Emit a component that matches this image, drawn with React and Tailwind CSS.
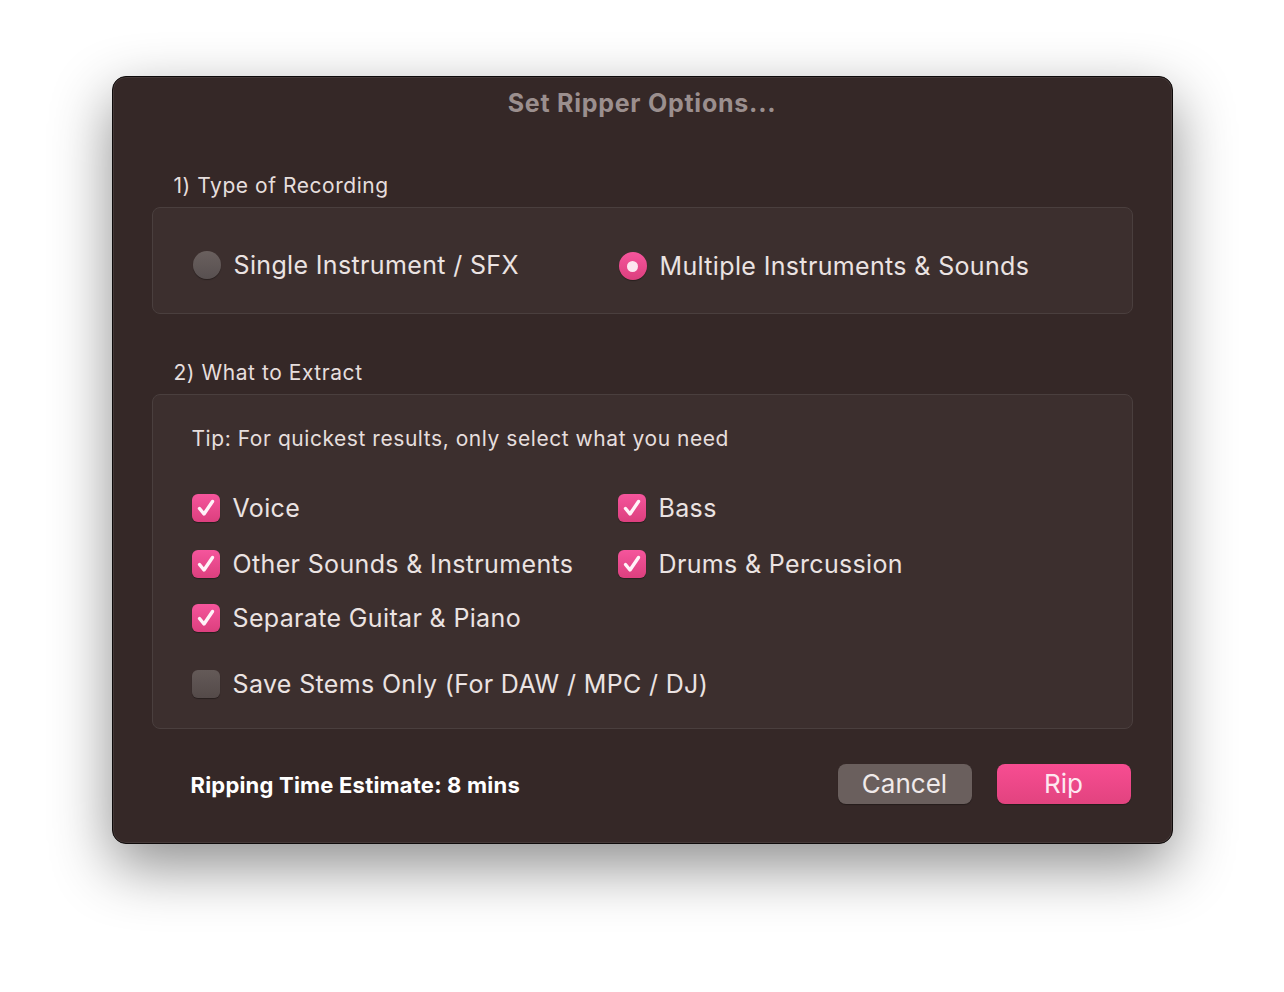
import React, { useState } from 'react';

const font = { fontFamily: 'Inter, "Noto Sans", "Liberation Sans", sans-serif' };

function Radio({ checked, label, onClick }) {
  return (
    <button onClick={onClick} className="flex items-center gap-[13px] text-left">
      {checked ? (
        <span className="flex h-[28px] w-[28px] items-center justify-center rounded-full bg-gradient-to-b from-[#f5559c] to-[#dc3f7e] shadow-[0_1px_1px_rgba(0,0,0,0.35)]">
          <span className="h-[11px] w-[11px] rounded-full bg-[#fde6f0]" />
        </span>
      ) : (
        <span className="h-[28px] w-[28px] rounded-full bg-gradient-to-b from-[#6a605e] to-[#585050] shadow-[0_1px_1px_rgba(0,0,0,0.35)]" />
      )}
      <span className="text-[25px] leading-[28px] tracking-[0.35px] text-[#ebe3e2]">{label}</span>
    </button>
  );
}

function Check({ checked, label, onClick }) {
  return (
    <button onClick={onClick} className="flex h-[28px] items-center gap-[13px] text-left">
      {checked ? (
        <span className="flex h-[28px] w-[28px] items-center justify-center rounded-[6px] bg-gradient-to-b from-[#f5559c] to-[#dc3f7e] shadow-[0_1px_1px_rgba(0,0,0,0.35)]">
          <svg width="24" height="24" viewBox="0 0 24 24" fill="none">
            <path d="M5.5 12.5 L10 18 L18.5 5.5" stroke="#fff3f8" strokeWidth="3.4" strokeLinecap="round" strokeLinejoin="round" />
          </svg>
        </span>
      ) : (
        <span className="h-[28px] w-[28px] rounded-[6px] bg-gradient-to-b from-[#645a58] to-[#544a49] shadow-[0_1px_1px_rgba(0,0,0,0.35)]" />
      )}
      <span className="text-[25px] leading-[28px] tracking-[0.35px] text-[#ebe3e2]">{label}</span>
    </button>
  );
}

export default function App() {
  const [type, setType] = useState('multi');
  const [opts, setOpts] = useState({
    voice: true,
    bass: true,
    other: true,
    drums: true,
    separate: true,
    stems: false,
  });

  const toggle = (k) => setOpts({ ...opts, [k]: !opts[k] });

  return (
    <div className="min-h-[992px] w-full bg-white pt-[76px]" style={font}>
      <div className="mx-auto h-[768px] w-[1061px] rounded-[14px] border border-[#0e0a0a] bg-[#352827] px-[39px] shadow-[0_22px_60px_rgba(0,0,0,0.45),inset_0_0_0_1px_rgba(255,255,255,0.08)]">
        <div className="pt-[12px] text-center text-[25px] font-bold leading-[28px] tracking-[0.75px] text-[#9b8f8e]">
          Set Ripper Options...
        </div>

        <div className="mt-[57px] pl-[22px] text-[21px] leading-[24px] tracking-[0.55px] text-[#e6dedd]">1) Type of Recording</div>
        <div className="mt-[9px] grid h-[107px] grid-cols-[426px_1fr] items-center rounded-[8px] border border-[#4a3f3e] bg-[#3c2f2e] pl-[40px] pt-[8px]">
          <Radio checked={type === 'single'} label="Single Instrument / SFX" onClick={() => setType('single')} />
          <div className="pt-[3px]">
            <Radio checked={type === 'multi'} label="Multiple Instruments & Sounds" onClick={() => setType('multi')} />
          </div>
        </div>

        <div className="mt-[47px] pl-[22px] text-[21px] leading-[24px] tracking-[0.55px] text-[#e6dedd]">2) What to Extract</div>
        <div className="mt-[9px] h-[335px] rounded-[8px] border border-[#4a3f3e] bg-[#3c2f2e] pl-[39px] pt-[32px]">
          <div className="text-[21px] leading-[24px] tracking-[0.55px] text-[#e6dedd]">Tip: For quickest results, only select what you need</div>
          <div className="mt-[43px] grid grid-cols-[426px_1fr] gap-y-[28px]">
            <Check checked={opts.voice} label="Voice" onClick={() => toggle('voice')} />
            <Check checked={opts.bass} label="Bass" onClick={() => toggle('bass')} />
            <Check checked={opts.other} label="Other Sounds & Instruments" onClick={() => toggle('other')} />
            <Check checked={opts.drums} label="Drums & Percussion" onClick={() => toggle('drums')} />
          </div>
          <div className="mt-[26px]">
            <Check checked={opts.separate} label="Separate Guitar & Piano" onClick={() => toggle('separate')} />
          </div>
          <div className="mt-[38px]">
            <Check checked={opts.stems} label="Save Stems Only (For DAW / MPC / DJ)" onClick={() => toggle('stems')} />
          </div>
        </div>

        <div className="mt-[35px] flex h-[40px] items-center justify-between pl-[39px] pr-[2px]">
          <div className="pt-[2px] text-[22px] font-bold tracking-[0.2px] text-white">Ripping Time Estimate: 8 mins</div>
          <div className="flex gap-[25px]">
            <button className="h-[40px] w-[134px] rounded-[8px] bg-[#6a5f5d] pb-[3px] text-[26px] text-[#f0eaea] shadow-[0_1px_1px_rgba(0,0,0,0.3)]">
              Cancel
            </button>
            <button className="h-[40px] w-[134px] rounded-[8px] bg-gradient-to-b from-[#f74d92] to-[#e2437f] pb-[3px] text-[26px] text-[#fde8f1] shadow-[0_1px_1px_rgba(0,0,0,0.3)]">
              Rip
            </button>
          </div>
        </div>
      </div>
    </div>
  );
}
